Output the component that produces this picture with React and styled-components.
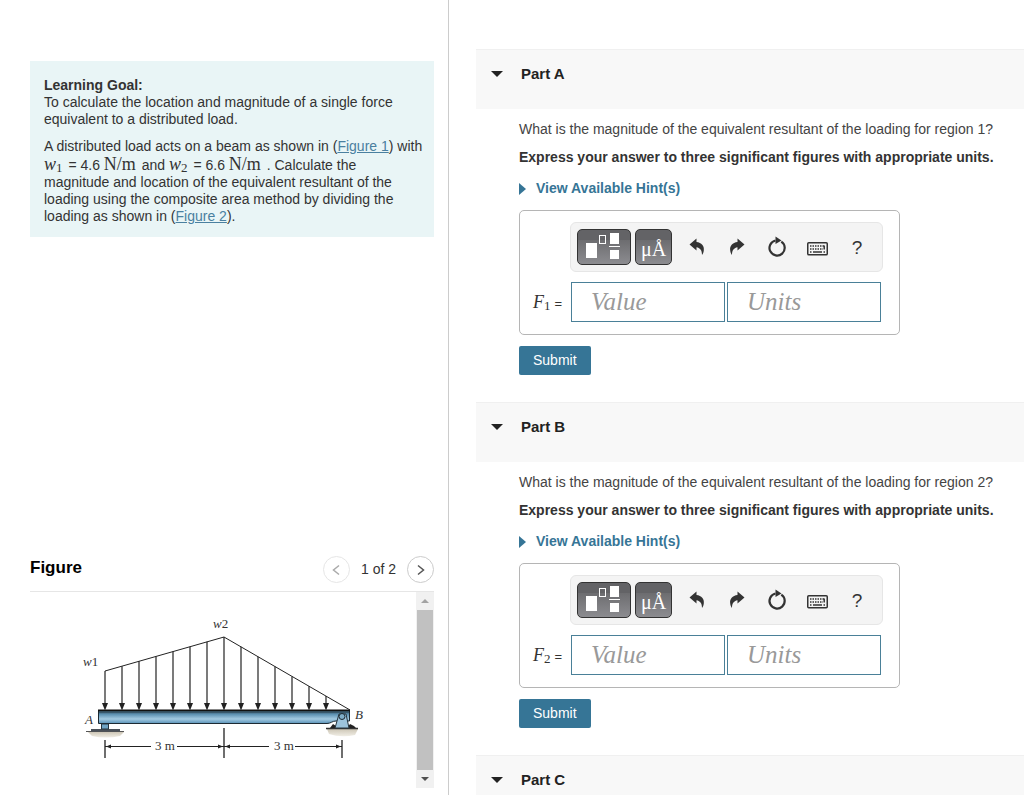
import React from "react";
import styled, { createGlobalStyle } from "styled-components";

const arrows = Array.from({ length: 14 }, (_, i) => {
  const x = 75 + i * 17;
  const top = i <= 7 ? 79 - (i * 34) / 7 : 45 + ((x - 194) * 73) / 126;
  return { x, top };
});

function BeamFigure() {
  return (
    <FigureDrawing viewBox="0 0 386 196" role="img" aria-label="Beam with distributed load">
      <defs>
        <linearGradient id="beam" x1="0" y1="0" x2="0" y2="1">
          <stop offset="0" stopColor="#4f7f9d" />
          <stop offset="0.3" stopColor="#5f93b4" />
          <stop offset="0.65" stopColor="#a3cae2" />
          <stop offset="1" stopColor="#5b93b8" />
        </linearGradient>
        <linearGradient id="ground" x1="0" y1="0" x2="0" y2="1">
          <stop offset="0" stopColor="#cdc6b6" />
          <stop offset="1" stopColor="#f1eee6" />
        </linearGradient>
      </defs>

      <path d="M58 140H94L90 144Q76 147 62 144Z" fill="url(#ground)" />
      <path d="M56 139.5H94" stroke="#555" strokeWidth="1" />
      <rect x="61" y="137" width="29" height="2.5" fill="#4a5058" />
      <rect x="71.5" y="132" width="7" height="5" fill="#6fa3c4" stroke="#26343e" />

      <path
        d="M68.5 118.5H319.5V129H306C302 129 301 131.5 297 131.5H68.5Z"
        fill="url(#beam)"
        stroke="#1d2a33"
      />
      <path d="M68 118.5H320" stroke="#111" strokeWidth="2" />
      <path d="M69 120.5H319" stroke="#38586d" strokeWidth="1.5" />

      <path d="M297 137H328L325 143Q311 146 299 142Z" fill="url(#ground)" />
      <path d="M296 136.5H328" stroke="#333" strokeWidth="1.5" />
      <path
        d="M300 136L303 132L306 134L308 136ZM317 136L320 132L324 134L326 136Z"
        fill="#222"
      />
      <path d="M305 136L309 122H316L319 136Z" fill="#9cc3dc" stroke="#26343e" />
      <circle cx="312" cy="124.5" r="3" fill="#7fadc9" stroke="#1d2a33" />

      <path d="M75 79L194 45L320 118" fill="none" stroke="#222" />
      {arrows.map(({ x, top }) => (
        <g key={x}>
          <path d={`M${x} ${top}V113`} stroke="#222" strokeWidth="1.2" />
          <path d={`M${x - 3} 111H${x + 3}L${x} 118.5Z`} fill="#222" />
        </g>
      ))}

      <g stroke="#222">
        <path d="M75 148V166M194 136V166M312 148V166" strokeWidth="1.3" />
        <path d="M75 154.5H121M147 154.5H194M194 154.5H239M265 154.5H312" />
      </g>
      <path
        d="M76 154.5l5-2v4zM193 154.5l-5-2v4zM195 154.5l5-2v4zM311 154.5l-5-2v4z"
        fill="#222"
      />

      <Label x="53" y="74">
        <tspan fontStyle="italic">w</tspan>1
      </Label>
      <Label x="183" y="36">
        <tspan fontStyle="italic">w</tspan>2
      </Label>
      <Label x="55" y="132" fontStyle="italic">A</Label>
      <Label x="325" y="127" fontStyle="italic">B</Label>
      <Label x="125" y="158">3 m</Label>
      <Label x="244" y="158">3 m</Label>
    </FigureDrawing>
  );
}

function TemplateIcon() {
  return (
    <svg width="38" height="30" viewBox="0 0 38 30" aria-hidden="true">
      <rect x="1" y="11" width="11" height="15" fill="#fff" />
      <rect x="14.5" y="3.5" width="6" height="8" fill="none" stroke="#fff" />
      <rect x="25" y="1" width="9" height="11" fill="#fff" />
      <rect x="24" y="14" width="11" height="1" fill="#fff" />
      <rect x="25" y="18" width="9" height="9" fill="#fff" />
    </svg>
  );
}

function UndoIcon() {
  return (
    <svg width="16" height="18" viewBox="0 0 16 18" aria-hidden="true">
      <path
        d="M0.5 6.5L7.5 0.5V4C12.5 4.5 15.5 8 14.8 12.5C14.6 14.2 14 15.8 13 17C13 12.8 11.5 10 7.5 9.3V12.5Z"
        fill="#333"
      />
    </svg>
  );
}

function RedoIcon() {
  return (
    <svg width="16" height="18" viewBox="0 0 16 18" aria-hidden="true">
      <path
        d="M15.5 6.5L8.5 0.5V4C3.5 4.5 0.5 8 1.2 12.5C1.4 14.2 2 15.8 3 17C3 12.8 4.5 10 8.5 9.3V12.5Z"
        fill="#333"
      />
    </svg>
  );
}

function ResetIcon() {
  return (
    <svg width="20" height="22" viewBox="0 0 20 22" aria-hidden="true">
      <path d="M14.3 5.6A7.6 7.6 0 1 1 8.5 4.5" fill="none" stroke="#333" strokeWidth="2.2" />
      <path d="M8.5 0.5L14.5 4.5L8.5 8Z" fill="#333" />
    </svg>
  );
}

function KeyboardIcon() {
  return (
    <svg width="21" height="18" viewBox="0 -4 21 18" aria-hidden="true">
      <rect
        x="0.75"
        y="0.75"
        width="19.5"
        height="12"
        rx="1"
        fill="none"
        stroke="#333"
        strokeWidth="1.5"
      />
      <path d="M3 4H18" stroke="#333" strokeWidth="1.5" strokeDasharray="1.5 1" />
      <path d="M3 7H16" stroke="#333" strokeWidth="1.5" strokeDasharray="1.5 1" />
      <path d="M17.2 3.5V7.5" stroke="#333" strokeWidth="1.5" />
      <path d="M3 10H4.5M6 10H15M16.5 10H18" stroke="#333" strokeWidth="1.5" />
    </svg>
  );
}

function Answer({ index }) {
  const id = `force-${index}`;
  return (
    <AnswerBox>
      <Toolbar role="toolbar" aria-label="Math tools">
        <PaletteButton type="button" $wide aria-label="Templates">
          <TemplateIcon />
        </PaletteButton>
        <PaletteButton type="button">μÅ</PaletteButton>
        <ToolGroup>
          <ToolButton type="button" aria-label="Undo">
            <UndoIcon />
          </ToolButton>
          <ToolButton type="button" aria-label="Redo">
            <RedoIcon />
          </ToolButton>
          <ToolButton type="button" aria-label="Reset">
            <ResetIcon />
          </ToolButton>
          <ToolButton type="button" aria-label="Keyboard">
            <KeyboardIcon />
          </ToolButton>
          <ToolButton type="button">?</ToolButton>
        </ToolGroup>
      </Toolbar>
      <AnswerRow>
        <AnswerLabel htmlFor={id}>
          <Symbol name="F" index={index} />
          <span>=</span>
        </AnswerLabel>
        <AnswerInput id={id} placeholder="Value" />
        <AnswerInput placeholder="Units" aria-label="Units" />
      </AnswerRow>
    </AnswerBox>
  );
}

function Symbol({ name, index }) {
  return (
    <MathText>
      <i>{name}</i>
      <sub>{index}</sub>
    </MathText>
  );
}

function PartTitle({ children }) {
  return (
    <PartHeader>
      <PartToggle type="button">
        <svg width="12" height="6" viewBox="0 0 12 6" aria-hidden="true">
          <path d="M0 0H12L6 6Z" fill="#222" />
        </svg>
        {children}
      </PartToggle>
    </PartHeader>
  );
}

function Part({ title, region }) {
  return (
    <section>
      <PartTitle>{title}</PartTitle>
      <PartBody>
        <Question>
          What is the magnitude of the equivalent resultant of the loading for region {region}?
        </Question>
        <Instruction>
          Express your answer to three significant figures with appropriate units.
        </Instruction>
        <HintButton type="button">
          <svg width="7" height="12" viewBox="0 0 7 12" aria-hidden="true">
            <path d="M0 0L7 6L0 12Z" fill="#367596" />
          </svg>
          View Available Hint(s)
        </HintButton>
        <Answer index={region} />
        <SubmitButton type="submit">Submit</SubmitButton>
      </PartBody>
    </section>
  );
}

function App() {
  return (
    <>
      <GlobalStyle />
      <Page>
        <Sidebar>
          <GoalBox>
            <p>
              <strong>Learning Goal:</strong>
              <br />
              To calculate the location and magnitude of a single force equivalent to a distributed
              load.
            </p>
            <p>
              A distributed load acts on a beam as shown in (<a href="#figure">Figure 1</a>) with{" "}
              <Symbol name="w" index={1} /> = 4.6 <MathText>N/m</MathText> and{" "}
              <Symbol name="w" index={2} /> = 6.6 <MathText>N/m</MathText> . Calculate the magnitude
              and location of the equivalent resultant of the loading using the composite area
              method by dividing the loading as shown in (<a href="#figure">Figure 2</a>).
            </p>
          </GoalBox>
          <FigurePanel id="figure">
            <FigureHeader>
              <h2>Figure</h2>
              <Pager>
                <PagerButton type="button" disabled aria-label="Previous figure">
                  <svg width="8" height="12" viewBox="0 0 8 12" aria-hidden="true">
                    <path d="M7 1.5L1.5 6L7 10.5" />
                  </svg>
                </PagerButton>
                <span>1 of 2</span>
                <PagerButton type="button" aria-label="Next figure">
                  <svg width="8" height="12" viewBox="0 0 8 12" aria-hidden="true">
                    <path d="M1 1.5L6.5 6L1 10.5" />
                  </svg>
                </PagerButton>
              </Pager>
            </FigureHeader>
            <FigureView>
              <BeamFigure />
              <Scrollbar>
                <ScrollButton type="button" aria-label="Scroll up">
                  <svg width="8" height="4" viewBox="0 0 8 4" aria-hidden="true">
                    <path d="M4 0L8 4H0Z" fill="#a3a3a3" />
                  </svg>
                </ScrollButton>
                <ScrollThumb />
                <ScrollButton type="button" aria-label="Scroll down">
                  <svg width="8" height="4" viewBox="0 0 8 4" aria-hidden="true">
                    <path d="M0 0H8L4 4Z" fill="#505050" />
                  </svg>
                </ScrollButton>
              </Scrollbar>
            </FigureView>
          </FigurePanel>
        </Sidebar>
        <Main>
          <Part title="Part A" region={1} />
          <Part title="Part B" region={2} />
          <PartTitle>Part C</PartTitle>
        </Main>
      </Page>
    </>
  );
}

const GlobalStyle = createGlobalStyle`
  * {
    box-sizing: border-box;
  }

  body {
    margin: 0;
    background: #fff;
    color: #333;
    font-family: "Liberation Sans", Arial, sans-serif;
    font-size: 14px;
    line-height: 17px;
  }

  button {
    padding: 0;
    border: 0;
    background: none;
    color: inherit;
    font: inherit;
    cursor: pointer;
  }

  p, h2 {
    margin: 0;
  }
`;

const Page = styled.div`
  display: grid;
  grid-template-columns: minmax(0, 7fr) minmax(0, 9fr);
  height: 100vh;
`;

const Sidebar = styled.aside`
  display: flex;
  flex-direction: column;
  justify-content: space-between;
  min-height: 0;
  padding: 61px 14px 7px 30px;
`;

const GoalBox = styled.section`
  display: flex;
  flex-direction: column;
  gap: 10px;
  padding: 16px 10px 12px 14px;
  background: #e9f5f6;

  a {
    color: #4a80a0;
  }
`;

const MathText = styled.span`
  margin-right: 2px;
  font-family: "Liberation Serif", "Times New Roman", serif;
  font-size: 18px;
  line-height: 19px;

  sub {
    font-size: 13px;
    line-height: 0;
    vertical-align: -2px;
  }
`;

const FigurePanel = styled.section`
  display: flex;
  flex-direction: column;
`;

const FigureHeader = styled.header`
  display: flex;
  justify-content: space-between;
  padding-bottom: 8px;
  border-bottom: 1px solid #e6e6e6;

  h2 {
    color: #000;
    font-size: 17px;
    line-height: 24px;
  }
`;

const Pager = styled.div`
  display: flex;
  align-items: center;
  gap: 11px;
`;

const PagerButton = styled.button`
  display: flex;
  align-items: center;
  justify-content: center;
  width: 27px;
  height: 27px;
  border: 1px solid #ccc;
  border-radius: 50%;

  path {
    fill: none;
    stroke: #555;
    stroke-width: 1.5;
  }

  &:disabled {
    border-color: #e6e6e6;
    cursor: default;
  }

  &:disabled path {
    stroke: #aaa;
  }
`;

const FigureView = styled.div`
  display: flex;
`;

const FigureDrawing = styled.svg`
  flex: 1;
  min-width: 0;
`;

const Label = styled.text`
  fill: #333;
  font-family: "Liberation Serif", "Times New Roman", serif;
  font-size: 13px;
`;

const Scrollbar = styled.div`
  display: flex;
  flex-direction: column;
  width: 18px;
  background: #f1f1f1;
`;

const ScrollButton = styled.button`
  display: flex;
  align-items: center;
  justify-content: center;
  height: 18px;
`;

const ScrollThumb = styled.div`
  flex: 1;
  margin: 0 1px;
  background: #c1c1c1;
`;

const Main = styled.main`
  min-height: 0;
  padding: 49px 0 0 27px;
  overflow-y: auto;
  scrollbar-width: none;
  border-left: 1px solid #ccc;
`;

const PartHeader = styled.h2`
  height: 60px;
  padding: 15px;
  border-top: 1px solid #f0f0f0;
  background: #f8f8f8;
  font-size: 15px;
  line-height: 17px;
`;

const PartToggle = styled.button`
  display: flex;
  align-items: center;
  gap: 18px;
  color: #222;
`;

const PartBody = styled.div`
  display: flex;
  flex-direction: column;
  align-items: flex-start;
  padding: 12px 16px 27px 43px;
`;

const Question = styled.p`
  margin-bottom: 11px;
  color: #444;
`;

const Instruction = styled.p`
  margin-bottom: 14px;
  font-weight: bold;
`;

const HintButton = styled.button`
  display: flex;
  align-items: center;
  gap: 10px;
  margin-bottom: 13px;
  color: #367596;
  font-weight: bold;
`;

const AnswerBox = styled.div`
  display: flex;
  flex-direction: column;
  gap: 10px;
  width: 381px;
  max-width: 100%;
  margin-bottom: 11px;
  padding: 11px 16px 12px 13px;
  border: 1px solid #b5b5b5;
  border-radius: 5px;
`;

const Toolbar = styled.div`
  display: flex;
  align-items: center;
  gap: 4px;
  height: 50px;
  margin-left: 37px;
  padding: 0 6px;
  border: 1px solid #e6e6e6;
  border-radius: 6px;
  background: #f4f4f4;
`;

const PaletteButton = styled.button`
  display: flex;
  flex-shrink: 0;
  align-items: center;
  justify-content: center;
  width: ${(props) => (props.$wide ? "54px" : "37px")};
  height: 36px;
  padding-top: ${(props) => (props.$wide ? "0" : "4px")};
  border: 1px solid #333;
  border-radius: 5px;
  background: linear-gradient(#636366 0 30%, #6d6d70 30%, #8c8c90);
  color: #fff;
  font-family: "Liberation Serif", "Times New Roman", serif;
  font-size: 20px;
  line-height: 24px;
`;

const ToolGroup = styled.div`
  display: flex;
  gap: 8px;
  margin-left: 5px;
`;

const ToolButton = styled.button`
  display: flex;
  align-items: center;
  justify-content: center;
  width: 32px;
  height: 32px;
  font-size: 19px;
`;

const AnswerRow = styled.div`
  display: flex;
  align-items: center;
  gap: 2px;
`;

const AnswerLabel = styled.label`
  display: flex;
  align-items: baseline;
  gap: 2px;
  width: 36px;
  font-size: 13px;
`;

const AnswerInput = styled.input`
  width: 154px;
  min-width: 0;
  height: 40px;
  padding: 0 19px;
  border: 1px solid #4a8098;
  border-radius: 0;
  color: #333;
  font-family: "Liberation Serif", "Times New Roman", serif;
  font-size: 25px;

  &::placeholder {
    color: #999;
    font-style: italic;
  }
`;

const SubmitButton = styled.button`
  height: 29px;
  padding: 0 14px;
  border-radius: 2px;
  background: #367596;
  color: #fff;
`;

export default App;
